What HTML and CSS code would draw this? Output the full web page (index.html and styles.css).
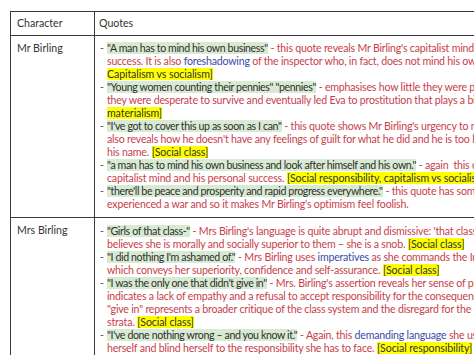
FILE: index.html
```html
<!DOCTYPE html>
<html>
<head>
<meta charset="utf-8">
<link rel="stylesheet" href="styles.css">
</head>
<body>
<table class="grid">
  <tr class="head">
    <td class="c1">Character</td>
    <td class="c2">Quotes</td>
  </tr>
  <tr>
    <td class="c1 name">Mr Birling</td>
    <td class="c2">
      <ul class="quotes">
        <li><span class="q">"A man has to mind his own business"</span> <span class="r">- this quote reveals Mr Birling's capitalist mind emphasising his personal</span><br><span class="r">success. It is also <span class="b">foreshadowing</span> of the inspector who, in fact, does not mind his own business. [</span><br><span class="y">Capitalism vs socialism]</span></li>
        <li><span class="q">"Young women counting their pennies" "pennies"</span> <span class="r">- emphasises how little they were paid and that</span><br><span class="r">they were desperate to survive and eventually led Eva to prostitution that plays a big role in her death. [</span><br><span class="y">materialism]</span></li>
        <li><span class="q">"I've got to cover this up as soon as I can"</span> <span class="r">- this quote shows Mr Birling's urgency to maintain his reputation. It</span><br><span class="r">also reveals how he doesn't have any feelings of guilt for what he did and he is too busy protecting</span><br><span class="r">his name.</span> <span class="y">[Social class]</span></li>
        <li><span class="q">"a man has to mind his own business and look after himself and his own."</span> <span class="r">- again&nbsp; this conveys his</span><br><span class="r">capitalist mind and his personal success.</span> <span class="y">[Social responsibility, capitalism vs socialism]</span></li>
        <li><span class="q">"there'll be peace and prosperity and rapid progress everywhere."</span> <span class="r">- this quote has some irony as the audience has</span><br><span class="r">experienced a war and so it makes Mr Birling's optimism feel foolish.</span></li>
      </ul>
    </td>
  </tr>
  <tr>
    <td class="c1 name">Mrs Birling</td>
    <td class="c2 second">
      <ul class="quotes">
        <li><span class="q">"Girls of that class-"</span> <span class="r">- Mrs Birling's language is quite abrupt and dismissive: 'that class?' shows she</span><br><span class="r">believes she is morally and socially superior to them – she is a snob.</span> <span class="y">[Social class]</span></li>
        <li><span class="q">"I did nothing I'm ashamed of."</span> <span class="r">- Mrs Birling uses <span class="b">imperatives</span> as she commands the Inspector to leave,</span><br><span class="r">which conveys her superiority, confidence and self-assurance.</span> <span class="y">[Social class]</span></li>
        <li><span class="q">"I was the only one that didn't give in"</span> <span class="r">- Mrs. Birling's assertion reveals her sense of pride and</span><br><span class="r">indicates a lack of empathy and a refusal to accept responsibility for the consequences of her actions.</span><br><span class="r">"give in" represents a broader critique of the class system and the disregard for the struggles of the lower</span><br><span class="r">strata.</span> <span class="y">[Social class]</span></li>
        <li><span class="q">"I've done nothing wrong – and you know it."</span> <span class="r">- Again, this <span class="b">demanding language</span> she uses to defend</span><br><span class="r">herself and blind herself to the responsibility she has to face.</span> <span class="y">[Social responsibility]</span></li>
      </ul>
    </td>
  </tr>
</table>
</body>
</html>
```

FILE: styles.css
```css
html, body {
  margin: 0;
  padding: 0;
  background: #ffffff;
  overflow: hidden;
  width: 474px;
  height: 355px;
}
body {
  font-family: Lato, "Noto Sans", sans-serif;
  font-size: 10.6px;
  line-height: 13px;
  color: #333333;
}
.grid {
  margin: 11px 0 0 10px;
  border-collapse: collapse;
  width: 620px;
  table-layout: fixed;
}
.grid td {
  border: 1.5px solid #3a3a3a;
  vertical-align: top;
  padding: 6px 5px;
  white-space: nowrap;
}
.grid .c1 {
  width: 72px;
  padding-left: 6px;
}
.grid .c2 {
  padding-left: 4px;
}
.head td {
  padding-top: 5px;
  padding-bottom: 5px;
}
.name {
  padding-top: 7px;
}
.grid .second {
  padding-top: 7px;
}
.quotes {
  list-style: none;
  margin: 0;
  padding: 0 0 0 8px;
}
.quotes li {
  position: relative;
}
.quotes li::before {
  content: "-";
  position: absolute;
  left: -7px;
  top: 0;
  color: #555555;
}
.q {
  background: #d9ead3;
  color: #2e2e2e;
  letter-spacing: -0.38px;
}
.r {
  color: #c8404a;
  letter-spacing: -0.2px;
}
.b {
  color: #3b4aa8;
}
.y {
  background: #ffff00;
  color: #333333;
  letter-spacing: -0.1px;
}
```
